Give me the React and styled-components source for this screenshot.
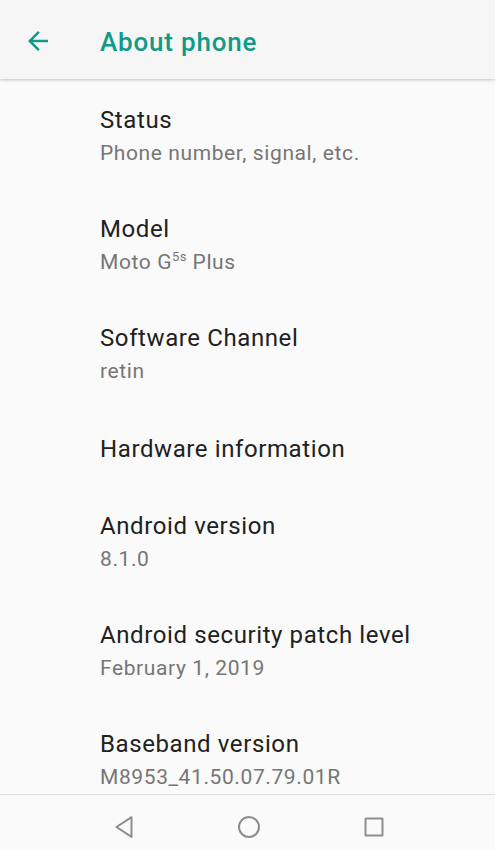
import React from "react";
import styled, { createGlobalStyle } from "styled-components";

const GlobalStyle = createGlobalStyle`
  html, body {
    margin: 0;
    padding: 0;
    background: #f9faf9;
    font-family: Roboto, "Noto Sans", sans-serif;
  }
`;

const Screen = styled.div`
  width: 495px;
  height: 850px;
  display: flex;
  flex-direction: column;
  background: #f9faf9;
  overflow: hidden;
`;

const Toolbar = styled.header`
  height: 79px;
  flex-shrink: 0;
  display: flex;
  align-items: center;
  background: #f5f6f5;
  box-shadow: 0 1px 3px rgba(0, 0, 0, 0.22);
  position: relative;
  z-index: 1;
`;

const BackButton = styled.div`
  width: 100px;
  display: flex;
  justify-content: center;
  padding-right: 24px;
  padding-top: 3px;
  box-sizing: border-box;
  color: #109a88;
`;

const Title = styled.h1`
  margin: 0;
  font-size: 26px;
  letter-spacing: 0.8px;
  font-weight: 500;
  color: #109a88;
  padding-top: 4px;
`;

const List = styled.div`
  flex: 1;
  overflow: hidden;
  padding-top: 3px;
`;

const Row = styled.div`
  min-height: 79px;
  box-sizing: border-box;
  padding: 23px 16px 23px 100px;
  display: flex;
  flex-direction: column;
  justify-content: center;
`;

const RowTitle = styled.div`
  font-size: 24px;
  letter-spacing: 0.6px;
  line-height: 30px;
  color: #212121;
`;

const RowSummary = styled.div`
  margin-top: 3px;
  font-size: 21px;
  letter-spacing: 0.6px;
  line-height: 30px;
  color: #767676;
`;

const Sup = styled.sup`
  font-size: 0.62em;
  vertical-align: 0.6em;
  line-height: 0;
  letter-spacing: 0.3px;
`;

const NavBar = styled.nav`
  height: 56px;
  flex-shrink: 0;
  border-top: 1px solid #dcdcdc;
  background: #fafafa;
  display: flex;
  align-items: center;
  justify-content: center;
  gap: 101px;
  padding-top: 8px;
  padding-left: 2px;
  box-sizing: border-box;
`;

const NavIcon = styled.svg`
  width: 24px;
  height: 24px;
  fill: none;
  stroke: #8d8d8d;
  stroke-width: 2;
`;

const items = [
  { title: "Status", summary: "Phone number, signal, etc." },
  { title: "Model", summary: <>Moto G<Sup>5s</Sup> Plus</> },
  { title: "Software Channel", summary: "retin" },
  { title: "Hardware information" },
  { title: "Android version", summary: "8.1.0" },
  { title: "Android security patch level", summary: "February 1, 2019" },
  { title: "Baseband version", summary: "M8953_41.50.07.79.01R" },
];

function App() {
  return (
    <>
      <GlobalStyle />
      <Screen>
        <Toolbar>
          <BackButton>
            <svg width="30" height="30" viewBox="0 0 24 24">
              <path d="M20 11H7.83l5.59-5.59L12 4l-8 8 8 8 1.41-1.41L7.83 13H20v-2z" fill="currentColor" />
            </svg>
          </BackButton>
          <Title>About phone</Title>
        </Toolbar>
        <List>
          {items.map(item => (
            <Row key={item.title}>
              <RowTitle>{item.title}</RowTitle>
              {item.summary && <RowSummary>{item.summary}</RowSummary>}
            </Row>
          ))}
        </List>
        <NavBar>
          <NavIcon viewBox="0 0 24 24">
            <path d="M19.5 2.2 L4.5 12 L19.5 21.8 Z" strokeLinejoin="round" />
          </NavIcon>
          <NavIcon viewBox="0 0 24 24">
            <circle cx="12" cy="12" r="10" />
          </NavIcon>
          <NavIcon viewBox="0 0 24 24">
            <rect x="3.5" y="3.5" width="17" height="17" rx="0.5" />
          </NavIcon>
        </NavBar>
      </Screen>
    </>
  );
}

export default App;
